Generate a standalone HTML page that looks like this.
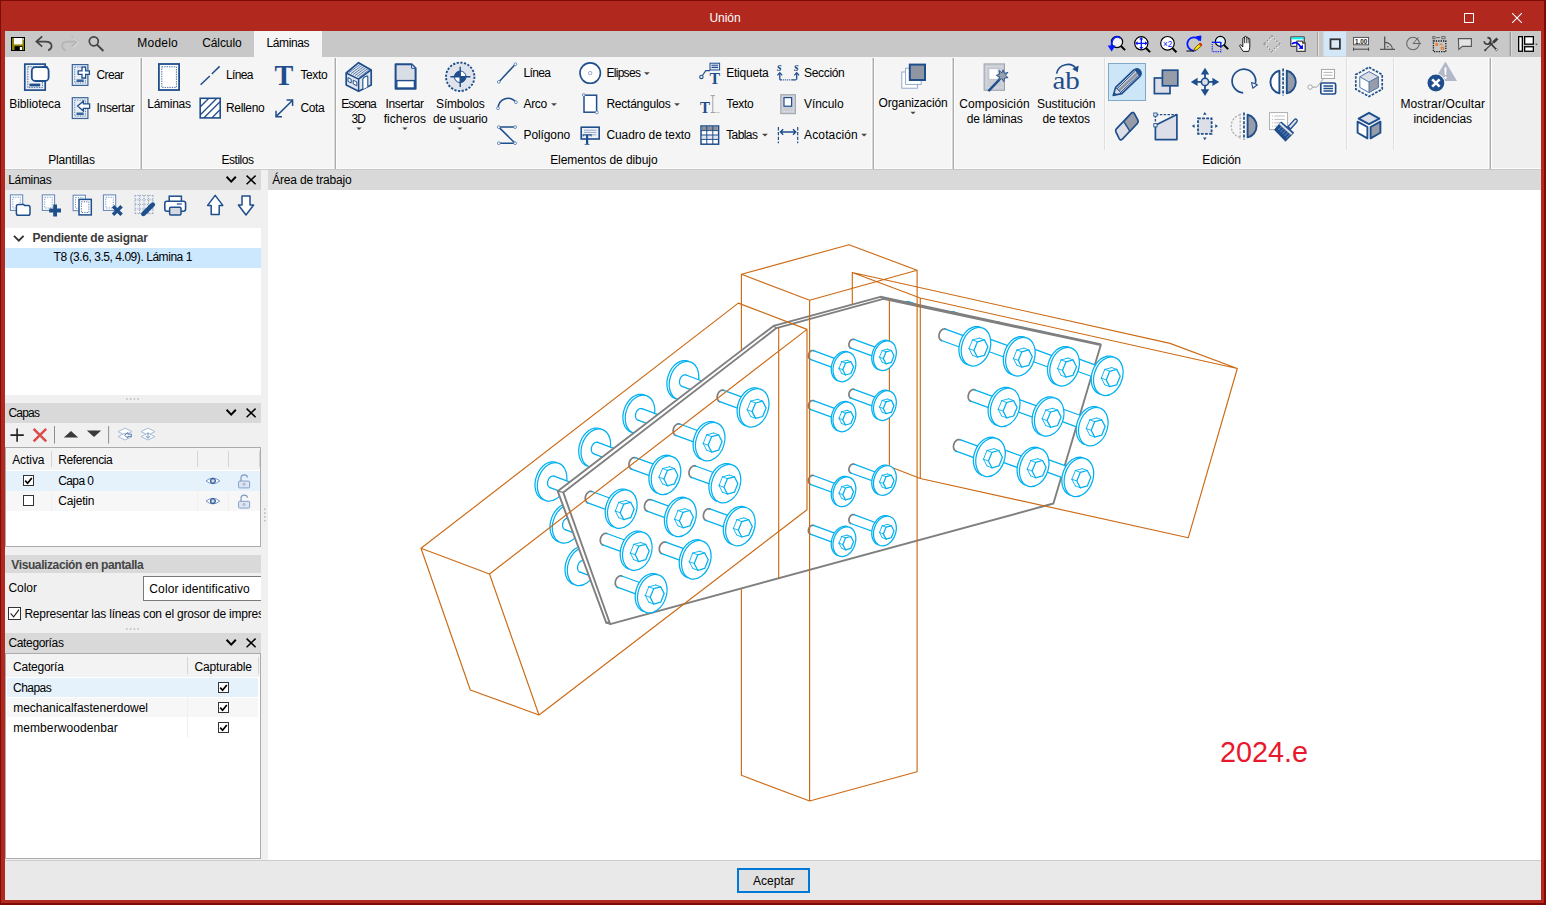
<!DOCTYPE html><html lang="es"><head><meta charset="utf-8"><title>Unión</title><style>
html,body{margin:0;padding:0}
body{width:1546px;height:905px;overflow:hidden;background:#b0281e;font-family:"Liberation Sans", Arial, sans-serif;font-size:12px;color:#000;position:relative}
div,span,svg{position:absolute;box-sizing:border-box}
.t{white-space:pre;line-height:14px;height:14px}
#frame{left:0;top:0;width:1546px;height:905px;border:1px solid #7d0c06;border-right:2px solid #7d0c06;border-bottom:2px solid #7d0c06}
#tabbar{left:5px;top:31px;width:1536px;height:26px;background:#c8c8c8}
#tabsel{left:254px;top:31px;width:68px;height:26px;background:#f5f5f5}
#ribbon{left:5px;top:57px;width:1485px;height:112px;background:#f5f5f5}
#ribbonr{left:1490px;top:57px;width:51px;height:112px;background:#efefef}
#under{left:5px;top:169px;width:1536px;height:731px;background:#f0f0f0}
.sep{width:4px;top:58px;height:111px;margin-left:-2px;border-left:1px solid #fcfcfc;border-right:1px solid #fdfdfd;background:linear-gradient(90deg,#d6d6d6 50%,#adadad 50%)}
.ssep{width:2px;top:58px;height:92px;border-left:1px solid #dedede;border-right:1px solid #fbfbfb}
.hdr{background:#d9d9d9;height:20px}
.white{background:#fff}
.grid{background:#fff;border:1px solid #ababab}
.dwg{left:0;top:0}
</style></head><body>
<div id="frame"></div>
<svg style="left:1464px;top:13px" width="10" height="10" viewBox="0 0 10 10" fill="none"><rect x="0.5" y="0.5" width="9" height="9" stroke="#fff"/></svg>
<svg style="left:1512px;top:13px" width="10" height="10" viewBox="0 0 10 10" fill="none"><path d="M0 0L10 10M10 0L0 10" stroke="#fff" stroke-width="1.1"/></svg>
<div id="tabbar"></div><div id="tabsel"></div>
<div id="ribbon"></div><div id="ribbonr"></div>
<div style="left:5px;top:168px;width:1536px;height:1px;background:#fbfbfb"></div><div style="left:5px;top:169px;width:1536px;height:1px;background:#c8c8c8"></div>
<div class="sep" style="left:141px"></div>
<div class="sep" style="left:335px"></div>
<div class="sep" style="left:873px"></div>
<div class="sep" style="left:953px"></div>
<div class="sep" style="left:1490px"></div>
<div class="ssep" style="left:1104px"></div>
<div class="ssep" style="left:1346px"></div>
<div class="ssep" style="left:1393px"></div>
<div id="under" style="top:170px;height:730px"></div>
<div class="hdr" style="left:5px;top:170px;width:256px"></div>
<div class="hdr" style="left:268px;top:170px;width:1273px"></div>
<div class="white" style="left:5px;top:228px;width:256px;height:167px"></div>
<div style="left:5px;top:248px;width:256px;height:20px;background:#cce8ff"></div>
<div class="hdr" style="left:5px;top:403px;width:256px"></div>
<div class="grid" style="left:5px;top:447px;width:256px;height:100px"></div>
<div style="left:6px;top:448px;width:254px;height:22px;background:#f3f3f3"></div>
<div style="left:6px;top:471px;width:254px;height:20px;background:#e5f1fb"></div>
<div style="left:6px;top:491px;width:254px;height:20px;background:#f7f7f7"></div>
<div style="left:51px;top:451px;width:1px;height:16px;background:#d5d5d5"></div>
<div style="left:197px;top:451px;width:1px;height:16px;background:#d5d5d5"></div>
<div style="left:228px;top:451px;width:1px;height:16px;background:#d5d5d5"></div>
<div style="left:259px;top:451px;width:1px;height:16px;background:#d5d5d5"></div>
<div style="left:51px;top:471px;width:1px;height:40px;background:#f0f0f0"></div>
<div style="left:197px;top:471px;width:1px;height:40px;background:#f0f0f0"></div>
<div style="left:228px;top:471px;width:1px;height:40px;background:#f0f0f0"></div>
<div class="hdr" style="left:5px;top:555px;width:256px;height:18px"></div>
<div style="left:143px;top:576px;width:118px;height:25px;background:#fff;border:1px solid #7a7a7a;border-right:none"></div>
<div class="hdr" style="left:5px;top:633px;width:256px"></div>
<div class="grid" style="left:5px;top:653px;width:256px;height:206px"></div>
<div style="left:6px;top:654px;width:254px;height:23px;background:#f3f3f3"></div>
<div style="left:7px;top:678px;width:251px;height:19px;background:#e5f1fb"></div>
<div style="left:7px;top:698px;width:251px;height:19px;background:#f7f7f7"></div>
<div style="left:187px;top:657px;width:1px;height:17px;background:#d5d5d5"></div>
<div style="left:258px;top:657px;width:1px;height:17px;background:#d5d5d5"></div>
<div style="left:187px;top:678px;width:1px;height:60px;background:#f0f0f0"></div>
<div class="white" style="left:268px;top:190px;width:1273px;height:670px"><svg class="dwg" width="1273" height="670" viewBox="268 190 1273 670" fill="none" stroke-width="1.25" stroke-linecap="round" stroke-linejoin="round">
<defs><g id="bl-sh"><path d="M-30.5 -17.6 L-0.3 -6.6 L-4.3 4.8 L-34.5 -6.2Z" fill="#fff" stroke="none"/><path d="M-34.5 -6.2 L-35.3 -6.6 L-35.9 -7.2 L-36.4 -8 L-36.8 -8.9 L-37 -10 L-37 -11.1 L-36.9 -12.3 L-36.5 -13.4 L-36.1 -14.5 L-35.5 -15.5 L-34.7 -16.3 L-33.9 -17 L-33.1 -17.5 L-32.2 -17.7 L-31.3 -17.8 L-30.5 -17.6" stroke="#7f7f7f" stroke-width="1.7"/><path d="M-30.5 -17.6 L-0.3 -6.6 M-34.5 -6.2 L-4.3 4.8" stroke="#00b0f0"/></g><g id="bl-hd" stroke="#00b0f0" fill="#fff"><ellipse cx="-2.3" cy="-0.9" rx="19.8" ry="14.1" transform="rotate(108.6 -2.3 -0.9)" stroke="none"/><path d="M-8.9 17.8 L-11.4 16.5 L-13.5 14.5 L-15.2 11.9 L-16.4 8.8 L-17 5.4 L-17.1 1.7 L-16.6 -2.1 L-15.5 -5.8 L-14 -9.4 L-12 -12.6 L-9.6 -15.4 L-7 -17.6 L-4.1 -19.1 L-1.2 -20 L1.6 -20.1 L4.3 -19.5" fill="none"/><ellipse cx="0" cy="0" rx="19.8" ry="14.1" transform="rotate(108.6 0 0)" /><path d="M11.9 0 L8.4 8.6 L1.4 10.5 L-2.1 3.7 L1.4 -4.9 L8.4 -6.8Z" fill="none"/><path d="M-3.5 8.6 L-7 1.9 M-7 1.9 L-3.5 -6.8 M-3.5 -6.8 L3.5 -8.6 M-3.5 8.6 L1.4 10.5 M-7 1.9 L-2.1 3.7 M-3.5 -6.8 L1.4 -4.9 M3.5 -8.6 L8.4 -6.8" fill="none" stroke-width="0.9"/></g><g id="bl-bk" stroke="#00b0f0" fill="#fff"><ellipse cx="-2.3" cy="-0.9" rx="19.8" ry="14.1" transform="rotate(108.6 -2.3 -0.9)" stroke="none"/><path d="M-8.9 17.8 L-11.4 16.5 L-13.5 14.5 L-15.2 11.9 L-16.4 8.8 L-17 5.4 L-17.1 1.7 L-16.6 -2.1 L-15.5 -5.8 L-14 -9.4 L-12 -12.6 L-9.6 -15.4 L-7 -17.6 L-4.1 -19.1 L-1.2 -20 L1.6 -20.1 L4.3 -19.5" fill="none"/><ellipse cx="0" cy="0" rx="19.8" ry="14.1" transform="rotate(108.6 0 0)" /><path d="M2 -5.7 L42 9.3 L38 20.7 L-2 5.7Z" stroke="none"/><path d="M-2 5.7 L-2.8 5.3 L-3.4 4.7 L-3.9 3.9 L-4.3 3 L-4.5 1.9 L-4.5 0.8 L-4.4 -0.4 L-4 -1.5 L-3.6 -2.6 L-3 -3.6 L-2.2 -4.4 L-1.4 -5.1 L-0.6 -5.6 L0.3 -5.8 L1.2 -5.9 L2 -5.7" fill="#fff"/><path d="M2 -5.7 L42 9.3 M-2 5.7 L38 20.7" fill="none"/></g><g id="bs-sh"><path d="M-30.9 -16.3 L-0.2 -5 L-3.3 3.7 L-34.1 -7.5Z" fill="#fff" stroke="none"/><path d="M-34.1 -7.5 L-34.6 -7.8 L-35.1 -8.3 L-35.5 -8.9 L-35.8 -9.6 L-35.9 -10.4 L-36 -11.3 L-35.9 -12.2 L-35.6 -13.1 L-35.2 -13.9 L-34.8 -14.7 L-34.2 -15.3 L-33.6 -15.8 L-32.9 -16.2 L-32.2 -16.4 L-31.6 -16.4 L-30.9 -16.3" stroke="#7f7f7f" stroke-width="1.7"/><path d="M-30.9 -16.3 L-0.2 -5 M-34.1 -7.5 L-3.3 3.7" stroke="#00b0f0"/></g><g id="bs-hd" stroke="#00b0f0" fill="#fff"><ellipse cx="-1.8" cy="-0.7" rx="15.3" ry="10.9" transform="rotate(108.6 -1.8 -0.7)" stroke="none"/><path d="M-6.9 13.7 L-8.8 12.7 L-10.4 11.2 L-11.7 9.2 L-12.6 6.8 L-13.1 4.1 L-13.1 1.3 L-12.8 -1.6 L-12 -4.5 L-10.8 -7.2 L-9.2 -9.7 L-7.4 -11.8 L-5.4 -13.5 L-3.2 -14.7 L-0.9 -15.4 L1.3 -15.5 L3.3 -15" fill="none"/><ellipse cx="0" cy="0" rx="15.3" ry="10.9" transform="rotate(108.6 0 0)" /><path d="M9.1 0 L6.5 6.6 L1.1 8.1 L-1.6 2.9 L1.1 -3.8 L6.5 -5.2Z" fill="none"/><path d="M-2.7 6.6 L-5.4 1.4 M-5.4 1.4 L-2.7 -5.2 M-2.7 -5.2 L2.7 -6.6 M-2.7 6.6 L1.1 8.1 M-5.4 1.4 L-1.6 2.9 M-2.7 -5.2 L1.1 -3.8 M2.7 -6.6 L6.5 -5.2" fill="none" stroke-width="0.9"/></g><g id="bs-bk" stroke="#00b0f0" fill="#fff"><ellipse cx="-1.8" cy="-0.7" rx="15.3" ry="10.9" transform="rotate(108.6 -1.8 -0.7)" stroke="none"/><path d="M-6.9 13.7 L-8.8 12.7 L-10.4 11.2 L-11.7 9.2 L-12.6 6.8 L-13.1 4.1 L-13.1 1.3 L-12.8 -1.6 L-12 -4.5 L-10.8 -7.2 L-9.2 -9.7 L-7.4 -11.8 L-5.4 -13.5 L-3.2 -14.7 L-0.9 -15.4 L1.3 -15.5 L3.3 -15" fill="none"/><ellipse cx="0" cy="0" rx="15.3" ry="10.9" transform="rotate(108.6 0 0)" /><path d="M1.6 -4.4 L41.6 10.6 L38.4 19.4 L-1.6 4.4Z" stroke="none"/><path d="M-1.6 4.4 L-2.1 4.1 L-2.6 3.6 L-3 3 L-3.3 2.3 L-3.4 1.5 L-3.5 0.6 L-3.4 -0.3 L-3.1 -1.2 L-2.7 -2 L-2.3 -2.8 L-1.7 -3.4 L-1.1 -3.9 L-0.4 -4.3 L0.3 -4.5 L0.9 -4.5 L1.6 -4.4" fill="#fff"/><path d="M1.6 -4.4 L41.6 10.6 M-1.6 4.4 L38.4 19.4" fill="none"/></g></defs>
<g>
<use href="#bl-bk" x="684" y="380.7"/>
<use href="#bl-bk" x="640" y="414.4"/>
<use href="#bl-bk" x="595.8" y="448.1"/>
<use href="#bl-bk" x="552.1" y="481.9"/>
<use href="#bl-bk" x="655.8" y="456.4"/>
<use href="#bl-bk" x="611.3" y="490.1"/>
<use href="#bl-bk" x="567.1" y="523.9"/>
<use href="#bl-bk" x="670.2" y="499.3"/>
<use href="#bl-bk" x="626.1" y="532.6"/>
<use href="#bl-bk" x="582.1" y="566.4"/>
<use href="#bl-bk" x="906.3" y="321.7"/>
<use href="#bl-bk" x="950.7" y="331.7"/>
<use href="#bl-bk" x="994.9" y="341.7"/>
<use href="#bl-bk" x="1038.6" y="351.2"/>
<use href="#bl-bk" x="935.5" y="382.4"/>
<use href="#bl-bk" x="979.5" y="391.9"/>
<use href="#bl-bk" x="1023.6" y="401.6"/>
<use href="#bl-bk" x="920.8" y="432.3"/>
<use href="#bl-bk" x="964.5" y="442.3"/>
<use href="#bl-bk" x="1009.2" y="452.3"/>
<use href="#bs-bk" x="776.8" y="341.5"/>
</g>
<g stroke="#7f7f7f" stroke-width="1.9" fill="#fff">
<path d="M557.7 491.2 L773.5 325.9 L880.4 296.8 L1100.3 344.2 L1052.2 502.9 L606.3 622.9Z"/>
<path d="M563.2 492.4 L776.4 328.1 L883.4 298.8 L1100.8 345 L1053.4 503.5 L610.2 624.2Z"/>
<path d="M557.7 491.2 L563.2 492.4 M773.5 325.9 L776.4 328.1 M880.4 296.8 L883.4 298.8 M606.3 622.9 L610.2 624.2" stroke-width="1.2"/>
</g>
<g>
<use href="#bl-sh" x="754.2" y="407.9"/>
<use href="#bl-sh" x="710.2" y="441.6"/>
<use href="#bl-sh" x="666" y="475.3"/>
<use href="#bl-sh" x="622.3" y="509.1"/>
<use href="#bl-sh" x="726" y="483.6"/>
<use href="#bl-sh" x="681.5" y="517.3"/>
<use href="#bl-sh" x="637.3" y="551.1"/>
<use href="#bl-sh" x="740.4" y="526.5"/>
<use href="#bl-sh" x="696.3" y="559.8"/>
<use href="#bl-sh" x="652.3" y="593.6"/>
<use href="#bl-sh" x="976" y="346.7"/>
<use href="#bl-sh" x="1020.4" y="356.7"/>
<use href="#bl-sh" x="1064.6" y="366.7"/>
<use href="#bl-sh" x="1108.3" y="376.2"/>
<use href="#bl-sh" x="1005.2" y="407.4"/>
<use href="#bl-sh" x="1049.2" y="416.9"/>
<use href="#bl-sh" x="1093.3" y="426.6"/>
<use href="#bl-sh" x="990.5" y="457.3"/>
<use href="#bl-sh" x="1034.2" y="467.3"/>
<use href="#bl-sh" x="1078.9" y="477.3"/>
<use href="#bs-sh" x="844.4" y="366.9"/>
<use href="#bs-sh" x="884.9" y="355.7"/>
<use href="#bs-sh" x="844.4" y="416.9"/>
<use href="#bs-sh" x="884.9" y="405.6"/>
<use href="#bs-sh" x="844.4" y="491.8"/>
<use href="#bs-sh" x="884.9" y="480.5"/>
<use href="#bs-sh" x="844.4" y="541.7"/>
<use href="#bs-sh" x="884.9" y="531"/>
</g>
<path d="M741.4 274.3 L849 244.7 L917.1 270.3 L809.6 300.2Z M741.4 274.3 L741.4 349.5 M741.4 589.5 L741.4 775.3 L809.6 801 L917.1 771.7 L917.1 270.3 M809.6 300.2 L809.6 801 M421 548.3 L738.3 303.1 L807 329.4 L489.5 574 L421 548.3 L470.3 690 L539 715 L489.5 574 M807 329.4 L807 509.8 L539 715 M778.7 328.4 L778.7 577.6 M852.3 272.5 L1170 343.4 L1237.3 368.5 L920.3 298Z M852.3 272.5 L852.3 303.5 M920.3 298 L920.3 478.5 L1188.3 537.7 L1237.3 368.5 M889.4 300.5 L889.4 466.5 L920.3 478.5" stroke="#cc6a14" stroke-width="1.15"/>
<g>
<use href="#bl-hd" x="754.2" y="407.9"/>
<use href="#bl-hd" x="710.2" y="441.6"/>
<use href="#bl-hd" x="666" y="475.3"/>
<use href="#bl-hd" x="622.3" y="509.1"/>
<use href="#bl-hd" x="726" y="483.6"/>
<use href="#bl-hd" x="681.5" y="517.3"/>
<use href="#bl-hd" x="637.3" y="551.1"/>
<use href="#bl-hd" x="740.4" y="526.5"/>
<use href="#bl-hd" x="696.3" y="559.8"/>
<use href="#bl-hd" x="652.3" y="593.6"/>
<use href="#bl-hd" x="976" y="346.7"/>
<use href="#bl-hd" x="1020.4" y="356.7"/>
<use href="#bl-hd" x="1064.6" y="366.7"/>
<use href="#bl-hd" x="1108.3" y="376.2"/>
<use href="#bl-hd" x="1005.2" y="407.4"/>
<use href="#bl-hd" x="1049.2" y="416.9"/>
<use href="#bl-hd" x="1093.3" y="426.6"/>
<use href="#bl-hd" x="990.5" y="457.3"/>
<use href="#bl-hd" x="1034.2" y="467.3"/>
<use href="#bl-hd" x="1078.9" y="477.3"/>
<use href="#bs-hd" x="844.4" y="366.9"/>
<use href="#bs-hd" x="884.9" y="355.7"/>
<use href="#bs-hd" x="844.4" y="416.9"/>
<use href="#bs-hd" x="884.9" y="405.6"/>
<use href="#bs-hd" x="844.4" y="491.8"/>
<use href="#bs-hd" x="884.9" y="480.5"/>
<use href="#bs-hd" x="844.4" y="541.7"/>
<use href="#bs-hd" x="884.9" y="531"/>
</g>
<text x="1220" y="762.4" font-family="'Liberation Sans',sans-serif" font-size="29" fill="#e8192c" stroke="none" textLength="88" lengthAdjust="spacingAndGlyphs">2024.e</text>
</svg></div>
<div style="left:5px;top:860px;width:1536px;height:1px;background:#cdcdcd"></div>
<div style="left:5px;top:861px;width:1536px;height:39px;background:#e9e9e9"></div>
<div style="left:737px;top:868px;width:73px;height:25px;border:2px solid #0078d7;background:#e1e1e1"></div>
<svg style="left:0;top:31px" width="1546" height="139" viewBox="0 31 1546 139" fill="none"><rect x="11" y="37" width="14" height="14" fill="#000"/><rect x="12" y="38" width="12" height="12" fill="#8a8200"/><rect x="14" y="38" width="8.4" height="6.4" fill="#fff"/><rect x="14.6" y="46.2" width="7.8" height="3.8" fill="#000"/><rect x="19.8" y="47" width="2.2" height="3" fill="#fff"/><rect x="23" y="38.6" width="0.9" height="1.2" fill="#fff"/><path d="M42.2 36.4L36.4 41.6L42.2 46.6M36.6 41.6H45.2C49.6 41.6 51.6 43.6 51.6 46C51.6 48 50.2 49.6 48.2 50.4" stroke="#444" stroke-width="1.7"/><path d="M71.6 36.4L77.4 41.6L71.6 46.6M77.2 41.6H68.6C64.2 41.6 62.2 43.6 62.2 46C62.2 48 63.6 49.6 65.6 50.4" stroke="#b4b4b4" stroke-width="1.7" stroke-dasharray="9 0"/><path d="M72.6 37.4L78.4 42.6L72.6 47.6" stroke="#e4e4e4" stroke-width="1"/><circle cx="93.8" cy="41.3" r="4.5" stroke="#444" stroke-width="1.7"/><path d="M97 44.6L103.4 51" stroke="#444" stroke-width="2"/><path d="M1120.92 45.92L1125.12 50.12" stroke="#000" stroke-width="2"/><circle cx="1117" cy="42" r="5.6" fill="#f4f4f4" stroke="#000" stroke-width="1.2"/><path d="M1120.5 38C1116 35 1111.5 38 1111.5 46" stroke="#0618ff" stroke-width="1.8"/><path d="M1107.6 45.6h8l-4 6z" fill="#0618ff"/><path d="M1145.92 47.92L1150.12 52.12" stroke="#000" stroke-width="2"/><circle cx="1141.3" cy="43.3" r="6.6" fill="#fff" stroke="#000" stroke-width="1.2"/><path d="M1141.3 38v10.6M1136 43.3h10.6" stroke="#0618ff" stroke-width="1.3"/><path d="M1141.3 37l2 2.6h-4zM1141.3 49.6l2 -2.6h-4zM1135 43.3l2.6 -2v4zM1147.6 43.3l-2.6 -2v4z" fill="#0618ff"/><path d="M1172.26 48.06L1176.46 52.26" stroke="#000" stroke-width="2"/><circle cx="1167.5" cy="43.3" r="6.8" fill="#fff" stroke="#000" stroke-width="1.2"/><text x="1162.9" y="46.6" font-size="8.5" font-family="'Liberation Sans',sans-serif" fill="#0618ff" textLength="9.4" lengthAdjust="spacingAndGlyphs">×2</text><path d="M1196 50.2A6.6 6.6 0 1 1 1199.6 40.6" stroke="#0618ff" stroke-width="1.8"/><path d="M1195.8 36.2l5.6 -0.6 -0.4 6z" fill="#0618ff"/><path d="M1186.4 51h7.6" stroke="#000" stroke-width="1"/><path d="M1193.8 50.8l1.2 -3 5 -4.6 2 2 -5 4.6z" fill="#ffe000" stroke="#5a4a00" stroke-width="0.8"/><circle cx="1200.6" cy="44.4" r="1.3" fill="#e02020"/><path d="M1223.9 44.9L1228.1 49.1" stroke="#000" stroke-width="2"/><circle cx="1220.4" cy="41.4" r="5" fill="#dff3f8" stroke="#000" stroke-width="1.2"/><rect x="1212.2" y="42.4" width="8.6" height="9.2" stroke="#0618ff" stroke-width="1.1" stroke-dasharray="1.1 1.1"/><path d="M1212.2 42.4h8.6v5" stroke="#0618ff" stroke-width="1.2"/><path d="M1243.2 51.4c-1-1.4-2.4-3.6-3.4-5.2-.6-1 .6-1.8 1.6-.8l1.4 1.6v-8.4c0-1.2 1.7-1.2 1.7 0v-1.4c0-1.2 1.8-1.2 1.8 0v.8c0-1.2 1.8-1.2 1.8 0v1.2c0-1.1 1.7-1.1 1.7 0v8c0 1.8-.6 3-1.2 4.200z" fill="#fff" stroke="#000" stroke-width="0.9"/><path d="M1244.5 38.6v4.600M1246.300 38v5.200M1248.100 38.800v4.400" stroke="#000" stroke-width="0.7"/><path d="M1265.200 44.600L1272.600 37L1280.200 44.600L1272.600 52.200z" stroke="#fff" stroke-width="1.100" stroke-dasharray="1.800 1.600"/><path d="M1264.400 43.800L1271.800 36.200L1279.400 43.800L1271.800 51.400z" stroke="#8c8c8c" stroke-width="1.100" stroke-dasharray="1.800 1.600"/><path d="M1270.200 36.400q1.600 -2 3.200 0M1270.200 51.200q1.600 2 3.200 0M1264.600 42.200q-2 1.600 0 3.200M1279.200 42.200q2 1.600 0 3.200" stroke="#9a9a9a" stroke-width="0.900"/><rect x="1290.800" y="36.800" width="13.400" height="9.600" rx="0.800" fill="#fff" stroke="#444" stroke-width="1.300"/><rect x="1291.400" y="37.400" width="12.200" height="1.900" fill="#00f6f6"/><path d="M1296.800 41.200h5.800v1.800h2.600v8.400h-8.400z" fill="#fff" stroke="#444" stroke-width="1.300" stroke-linejoin="round"/><path d="M1292.400 43.600c3.400 -2.400 6 -0.400 8.600 3.600" stroke="#0000ff" stroke-width="1.700" stroke-linecap="round"/><path d="M1303 49l-4.600 -0.200 4.400 -4.200z" fill="#0000ff"/><path d="M1317.500 32v24" stroke="#a2a2a2"/><path d="M1318.500 32v24" stroke="#e2e2e2"/><rect x="1323.500" y="31.500" width="22.500" height="25" fill="#d3e7f8"/><rect x="1330.500" y="39.300" width="9.400" height="9.400" stroke="#333" stroke-width="1.800" fill="#dbeaf8"/><rect x="1353.600" y="37.400" width="15" height="7.400" fill="#fff" stroke="#444" stroke-width="0.900"/><text x="1355" y="43.700" font-size="6.800" font-weight="bold" font-family="'Liberation Sans',sans-serif" fill="#222" textLength="12.200" lengthAdjust="spacingAndGlyphs">1.00</text><path d="M1353.600 49.200h15M1353.600 47.600v3.200M1368.600 47.600v3.200" stroke="#444" stroke-width="1"/><path d="M1384.700 36.600v12.800M1380 49.400h15" stroke="#555" stroke-width="1.300"/><path d="M1384.700 42.400c4.400 0 7.600 3 7.800 7" stroke="#555" stroke-width="1.100"/><circle cx="1387.800" cy="46.800" r="0.800" fill="#555"/><circle cx="1413" cy="43.500" r="6.300" stroke="#666" stroke-width="1.100"/><path d="M1421.200 43.500h-8.200l5.600 -6.200" stroke="#666" stroke-width="1"/><rect x="1433.400" y="41" width="12.400" height="10.600" stroke="#111" stroke-width="1.300" stroke-dasharray="1.300 1.100"/><rect x="1432.800" y="36.600" width="2.200" height="2.200" stroke="#555" stroke-width="0.800"/><path d="M1436.400 37.600h3.400" stroke="#555"/><rect x="1441.800" y="36.600" width="3.200" height="2.200" stroke="#555" stroke-width="0.800"/><rect x="1435.800" y="43.600" width="1.800" height="1.800" stroke="#e8701a" stroke-width="0.900"/><rect x="1441.200" y="47.300" width="2.400" height="2" stroke="#e8701a" stroke-width="0.900"/><path d="M1439.600 44.200h2.400v1.400" stroke="#e8701a" stroke-width="0.900"/><path d="M1458.400 38.600h13v7.800h-9l-3.600 3z" fill="#e4e4e4" stroke="#555" stroke-width="1.100"/><path d="M1489.600 42.400L1496.300 49.500" stroke="#3a3a3a" stroke-width="1.600" stroke-linecap="round"/><path d="M1487.400 37.600a3.300 3.300 0 1 1 -3.200 3.600" stroke="#3a3a3a" stroke-width="1.600"/><circle cx="1496.500" cy="49.700" r="1" fill="#fff" stroke="#3a3a3a" stroke-width="0.600"/><path d="M1497.400 38.600L1493.200 42.600" stroke="#3a3a3a" stroke-width="2.800"/><path d="M1493.200 42.600L1484.800 50.400" stroke="#3a3a3a" stroke-width="1.200"/><path d="M1486 49.400l-1.400 1.400" stroke="#3a3a3a" stroke-width="1.800"/><path d="M1509.500 32v24" stroke="#b4b4b4"/><path d="M1510.500 32v24" stroke="#9c9c9c"/><path d="M1511.500 32v24" stroke="#d6d6d6"/><rect x="1518.650" y="36.650" width="3.700" height="14.600" fill="#fff" stroke="#000" stroke-width="1.300"/><rect x="1524.650" y="36.650" width="8.700" height="7.500" fill="#fff" stroke="#000" stroke-width="1.300"/><rect x="1524.650" y="46.750" width="8.700" height="4.500" fill="#fff" stroke="#000" stroke-width="1.300"/><path d="M1535.1 43.85h2.6l-1.3 1.5z" fill="#333"/><rect x="24.800" y="64.100" width="20.400" height="26" fill="#eef1f6" stroke="#1f4e8c" stroke-width="1.700"/><rect x="27.800" y="66.800" width="14.600" height="20.800" stroke="#1f4e8c" stroke-width="0.800" stroke-dasharray="1.500 1"/><rect x="29.400" y="83.600" width="10.800" height="2.800" fill="#1f4e8c"/><rect x="31.800" y="67.200" width="16.800" height="13.800" rx="3.600" fill="#fff" stroke="#1f4e8c" stroke-width="1.800"/><path d="M42.600 67h4.200" stroke="#1f4e8c" stroke-width="2.200" stroke-linecap="round"/><rect x="72.3" y="64.6" width="15.6" height="20.8" fill="#e9edf4" stroke="#3a649c" stroke-width="1.2"/><rect x="74.7" y="67" width="10.8" height="16" stroke="#3a649c" stroke-width="0.8" stroke-dasharray="1.2 1.2"/><rect x="76.5" y="79.4" width="7.2" height="2.6" fill="#3a649c"/><rect x="72.3" y="97.7" width="15.6" height="20.8" fill="#e9edf4" stroke="#3a649c" stroke-width="1.2"/><rect x="74.7" y="100.1" width="10.8" height="16" stroke="#3a649c" stroke-width="0.8" stroke-dasharray="1.2 1.2"/><rect x="76.5" y="112.5" width="7.2" height="2.6" fill="#3a649c"/><path d="M82 67.200h3.600v3.600h3.800v3.600h-3.800v3.600h-3.600v-3.600h-3.800v-3.600h3.800z" fill="#fff" stroke="#1f4e8c" stroke-width="1.300"/><path d="M77.600 106l5.800 -4.800v2.700h6.200v4.400h-6.200v2.700z" fill="#fff" stroke="#1f4e8c" stroke-width="1.300"/><rect x="158.900" y="64" width="20.200" height="26" fill="#fff" stroke="#1f4e8c" stroke-width="1.800"/><rect x="161.800" y="66.800" width="14.600" height="20.600" stroke="#1f4e8c" stroke-width="0.800" stroke-dasharray="1.400 1"/><path d="M200.600 84.800L209.800 76M211.800 74L219.600 66.400" stroke="#1f4e8c" stroke-width="1.500"/><rect x="200.200" y="98.300" width="20" height="19.600" fill="#fff" stroke="#1f4e8c" stroke-width="1.600"/><path d="M200.600 106.500L208.600 98.500M200.600 114.500L216.600 98.500M204 117.700L220 101.700M212 117.700L220 109.700" stroke="#1f4e8c" stroke-width="1.300"/><text x="274.600" y="85.200" font-family="'Liberation Serif',serif" font-weight="bold" font-size="29" fill="#1f4e8c" textLength="18.800" lengthAdjust="spacingAndGlyphs">T</text><path d="M276 116.600L292.600 100.200M276 110.800v6h6M286.600 100h6v6" stroke="#1f4e8c" stroke-width="1.500"/><path d="M358.600 62.700L346.200 73V85.100L358.600 91.300L371.200 85.100V69.900z" fill="#e3e7ef" stroke="#1f4e8c" stroke-width="1.700" stroke-linejoin="round"/><path d="M346.200 73L358.600 79.200L371.200 69.900M358.600 79.200V91.300" stroke="#1f4e8c" stroke-width="1.500"/><path d="M349 72.600L360.400 64.200M351 73.600L362.400 65.200M353 74.600L364.400 66.200M355 75.600L366.400 67.200M357 76.600L368.400 68.200M358.800 77.800L370 69" stroke="#1f4e8c" stroke-width="0.700"/><path d="M348 77.600l3.200 1.600v3.800l-3.200 -1.600zM353.200 80.200l3.600 1.800v3.800l-3.600 -1.800z" fill="#fff" stroke="#1f4e8c" stroke-width="1"/><path d="M362.800 89.200v-9.600q0 -1.600 1.400 -2.400l1.800 -1q1.800 -0.800 1.800 1v9.600" fill="#fff" stroke="#1f4e8c" stroke-width="1.100"/><path d="M395.600 64.300H411.600L415.600 68.300V88.700H395.600z" fill="#d9dde6" stroke="#1f4e8c" stroke-width="2" stroke-linejoin="round"/><path d="M411.600 64.300V68.300H415.600z" fill="#fff" stroke="#1f4e8c" stroke-width="1"/><rect x="396.800" y="80.600" width="17.600" height="7.400" fill="#fff" stroke="#1f4e8c" stroke-width="1.400"/><circle cx="460.200" cy="76.800" r="14.200" fill="#dfe3ec" stroke="#1f4e8c" stroke-width="1.900" stroke-dasharray="2.200 1.500"/><circle cx="460.200" cy="76.800" r="5.800" fill="#fff"/><path d="M460.200 76.800V71A5.800 5.800 0 0 0 454.400 76.800zM460.200 76.800V82.600A5.800 5.800 0 0 0 466 76.800z" fill="#1f4e8c"/><circle cx="460.200" cy="76.800" r="5.800" stroke="#1f4e8c" stroke-width="1"/><path d="M450.400 76.800H470.400M460.200 66.800V87" stroke="#1f4e8c" stroke-width="1.400"/><path d="M356.4 127.4h5.2l-2.6 2.6z" fill="#444"/><path d="M402.3 127.4h5.2l-2.6 2.6z" fill="#444"/><path d="M457.3 127.4h5.2l-2.6 2.6z" fill="#444"/><path d="M498.800 81.900L515.400 64.200" stroke="#1f4e8c" stroke-width="1.500"/><circle cx="498.8" cy="81.9" r="1.400" fill="#fff" stroke="#4d74a8" stroke-width="0.800"/><circle cx="515.4" cy="64.2" r="1.400" fill="#fff" stroke="#4d74a8" stroke-width="0.800"/><path d="M498 108.200C498.600 99.600 508.800 94.400 515.900 102.200" stroke="#1f4e8c" stroke-width="1.500"/><circle cx="498" cy="108.2" r="1.400" fill="#fff" stroke="#4d74a8" stroke-width="0.800"/><circle cx="515.9" cy="102.2" r="1.400" fill="#fff" stroke="#4d74a8" stroke-width="0.800"/><path d="M515.100 127.100H498.800L515.100 143.200H498.800" stroke="#1f4e8c" stroke-width="1.500" stroke-linejoin="round"/><circle cx="515.1" cy="127.1" r="1.400" fill="#fff" stroke="#4d74a8" stroke-width="0.800"/><circle cx="498.8" cy="127.1" r="1.400" fill="#fff" stroke="#4d74a8" stroke-width="0.800"/><circle cx="515.1" cy="143.2" r="1.400" fill="#fff" stroke="#4d74a8" stroke-width="0.800"/><circle cx="498.8" cy="143.2" r="1.400" fill="#fff" stroke="#4d74a8" stroke-width="0.800"/><circle cx="590.200" cy="73.100" r="10.200" fill="#fff" stroke="#1f4e8c" stroke-width="1.600"/><circle cx="590.200" cy="73.100" r="1.700" stroke="#7d98bf" stroke-width="0.800"/><rect x="584" y="95.200" width="12.600" height="17" fill="#fff" stroke="#1f4e8c" stroke-width="1.500"/><circle cx="583.8" cy="95" r="1.400" fill="#fff" stroke="#4d74a8" stroke-width="0.800"/><circle cx="596.8" cy="112.4" r="1.400" fill="#fff" stroke="#4d74a8" stroke-width="0.800"/><rect x="581.200" y="127.200" width="18" height="11.800" fill="#eef1f6" stroke="#1f4e8c" stroke-width="1.600"/><path d="M584 130.200h12.400M584 132.400h12.400M590 134.800h6.400" stroke="#8fa3c4" stroke-width="0.900"/><path d="M582.600 134.200h9v2.200h-0.800l-0.400 -1h-2.200v8.400l1.400 0.400v0.600h-5v-0.600l1.400 -0.400v-8.400h-2.200l-0.400 1h-0.800z" fill="#1f4e8c"/><path d="M644 72.2h5.8l-2.9 2.8z" fill="#444"/><path d="M674.1 103.2h5.8l-2.9 2.8z" fill="#444"/><path d="M551.1 103.2h5.8l-2.9 2.8z" fill="#444"/><circle cx="701.400" cy="76.900" r="1.700" stroke="#1f4e8c" stroke-width="1.100"/><path d="M702.400 75.500L705.800 70.600H710" stroke="#1f4e8c" stroke-width="1.100"/><rect x="710" y="63.200" width="9.600" height="6.800" fill="#dfe4ee" stroke="#1f4e8c" stroke-width="1"/><path d="M711.600 65.300h6.400M711.600 67.400h6.400" stroke="#1f4e8c" stroke-width="1.100"/><text x="709.600" y="84" font-family="'Liberation Serif',serif" font-weight="bold" font-size="16.500" fill="#1f4e8c" textLength="10.600" lengthAdjust="spacingAndGlyphs">T</text><text x="700" y="113" font-family="'Liberation Serif',serif" font-weight="bold" font-size="17" fill="#1f4e8c" textLength="10" lengthAdjust="spacingAndGlyphs">T</text><path d="M712.800 95.600V112.400M710.600 95.600h4.400M710.600 112.500h4.400" stroke="#9a9a9a" stroke-width="0.900"/><path d="M715.600 112.500h4.400" stroke="#9a9a9a" stroke-width="0.900" stroke-dasharray="1 1"/><rect x="701" y="126" width="17.600" height="18.200" fill="#fff" stroke="#1f4e8c" stroke-width="1.500"/><rect x="701.800" y="126.800" width="16" height="3.400" fill="#8c8f96"/><rect x="701.800" y="135" width="16" height="3.800" fill="#dfe4ee"/><path d="M701 130.600h17.600M701 135h17.600M701 139.400h17.600M706.800 126v18.200M712.800 126v18.200" stroke="#1f4e8c" stroke-width="1"/><path d="M762.1 133.8h5.8l-2.9 2.8z" fill="#444"/><text x="777" y="71" font-family="'Liberation Serif',serif" font-style="italic" font-weight="bold" font-size="12" fill="#1f4e8c">s</text><text x="794" y="71" font-family="'Liberation Serif',serif" font-style="italic" font-weight="bold" font-size="12" fill="#1f4e8c">s</text><path d="M779.800 79.800V73.400M796.700 79.800V73.400" stroke="#1f4e8c" stroke-width="1.300"/><path d="M777.400 75.400l2.400 -2.800 2.400 2.800M794.300 75.400l2.400 -2.800 2.400 2.800" stroke="#1f4e8c" stroke-width="1.200"/><path d="M779.800 79.800H796.700" stroke="#1f4e8c" stroke-width="1.300" stroke-dasharray="2.400 1 1 1 1 1 1 1 1 1 2.400 0"/><rect x="780.800" y="94.700" width="14.600" height="19" fill="#c9ccd3" stroke="#9da2ad" stroke-width="1"/><rect x="782.800" y="96.800" width="10.600" height="14.800" stroke="#eceef2" stroke-width="0.700" stroke-dasharray="1 1"/><rect x="784" y="97.600" width="7.600" height="8.600" fill="#fff" stroke="#1f4e8c" stroke-width="1.200"/><path d="M778.400 127.100V143.200M797.700 127.100V143.200" stroke="#1f4e8c" stroke-width="1.200" stroke-dasharray="3.400 1.400"/><path d="M780.600 132H795.600M783.200 129.200L780.400 132L783.200 134.800M793 129.200L795.800 132L793 134.800" stroke="#1f4e8c" stroke-width="1.400"/><path d="M861.2 133.8h5.8l-2.9 2.8z" fill="#444"/><rect x="901.800" y="72" width="15.600" height="16.200" fill="#fff" stroke="#8aa3c8" stroke-width="0.900"/><rect x="905.600" y="68.200" width="15.600" height="16.200" fill="#fff" stroke="#8aa3c8" stroke-width="0.900"/><rect x="909.800" y="64.600" width="15.200" height="15.400" fill="#8f95a1" stroke="#1f4e8c" stroke-width="2"/><path d="M910.4 111.7h5.2l-2.6 2.6z" fill="#444"/><rect x="984.100" y="63.900" width="20.400" height="26.400" fill="#c9ccd3" stroke="#9da2ad" stroke-width="1"/><rect x="986.600" y="66.400" width="15.400" height="21.400" stroke="#eceef2" stroke-width="0.700" stroke-dasharray="1 1"/><rect x="988.900" y="68.700" width="9.200" height="10.600" fill="#fff" stroke="#b9bdc7" stroke-width="0.800"/><path d="M988.400 91.200L999.400 79.600" stroke="#1f4e8c" stroke-width="2.400"/><path d="M1003.100 69.800l1.200 3.600 3.600 -1 -2.400 2.900 2.600 2.400 -3.600 0.300 -0.600 3.800 -2 -3.200 -3.200 1.800 1 -3.600 -3.400 -1.400 3.400 -1.300 -0.600 -3.600 2.800 2.400z" fill="#9aa0ac" stroke="#1f4e8c" stroke-width="0.900"/><text x="1052.400" y="89.400" font-family="'Liberation Serif',serif" font-size="26" fill="#1f4e8c" textLength="27.400" lengthAdjust="spacingAndGlyphs">ab</text><path d="M1056.600 73.600C1058.600 63.600 1071.600 61.600 1076 68.600" stroke="#1f4e8c" stroke-width="1.600"/><path d="M1078.600 65.600l-0.800 6.600 -5.600 -3.200z" fill="#1f4e8c"/><rect x="1108.500" y="63.500" width="37" height="37" fill="#cde6f7" stroke="#7fa8c9" stroke-width="1"/><path d="M1113.200 95.400L1115.600 87.400L1133.600 70.200Q1137.200 67.200 1140 70.400Q1142.400 73.600 1139.600 76.600L1121.800 93.600z" fill="#d9dde6" stroke="#1f4e8c" stroke-width="1.600" stroke-linejoin="round"/><path d="M1118 89.600L1136.400 72.200L1138 74.200L1119.800 91.600z" fill="#8f95a1" stroke="none"/><path d="M1117 88.800L1135.200 71.200M1120.600 92.400L1138.800 75" stroke="#1f4e8c" stroke-width="1"/><path d="M1134.200 69.600Q1137.400 67.200 1140 70.400Q1142.400 73.600 1139.600 76.400z" fill="#1f4e8c"/><path d="M1113.200 95.400l1 -3.400 2.600 2.600z" fill="#1f4e8c"/><path d="M1115.600 87.400L1121.800 93.600" stroke="#1f4e8c" stroke-width="1"/><rect x="1154.400" y="78" width="15.600" height="15.600" fill="#dcdfe7" stroke="#1f4e8c" stroke-width="1.700"/><rect x="1162.400" y="70.200" width="15.400" height="15.600" fill="#979da8" stroke="#1f4e8c" stroke-width="1.700"/><path d="M1205 67.800l4.200 6.800h-8.400zM1205 96l4.200 -6.800h-8.400zM1190.800 81.900l6.800 -4.200v8.400zM1219.200 81.900l-6.800 -4.200v8.400z" fill="#1f4e8c"/><path d="M1205 73v18M1196 81.900h18" stroke="#1f4e8c" stroke-width="1.800"/><circle cx="1205" cy="81.900" r="3.600" fill="#dcdfe7" stroke="#1f4e8c" stroke-width="1.600"/><path d="M1243.200 92.800A11.800 11.800 0 1 1 1255.400 83.600" stroke="#1f4e8c" stroke-width="1.700"/><path d="M1251.600 82.600l5.800 2.200 -4.600 3.400z" fill="#fff" stroke="#1f4e8c" stroke-width="1.100" stroke-linejoin="round"/><path d="M1279.400 70.800A11.600 11.600 0 0 0 1279.400 93.400z" fill="#fff" stroke="#1f4e8c" stroke-width="1.900" stroke-linejoin="round"/><path d="M1286.800 70.800A11.600 11.600 0 0 1 1286.800 93.400z" fill="#979da8" stroke="#1f4e8c" stroke-width="1.900" stroke-linejoin="round"/><path d="M1283.100 68.400V95.600" stroke="#1f4e8c" stroke-width="1.700" stroke-dasharray="3 1.400"/><circle cx="1310.100" cy="87.100" r="2.200" fill="#fff" stroke="#9a9a9a" stroke-width="0.900"/><path d="M1312.400 87.100h4.400l6.400 -8" stroke="#9a9a9a" stroke-width="0.900"/><rect x="1321.400" y="69.400" width="13.200" height="9" fill="#fff" stroke="#9a9a9a" stroke-width="0.900"/><path d="M1323.400 72.400h9.200M1323.400 75.200h9.200" stroke="#b5b5b5" stroke-width="1"/><rect x="1320.800" y="83" width="14.800" height="11" rx="1.600" fill="#fff" stroke="#1f4e8c" stroke-width="1.700"/><path d="M1323.400 86h9.600M1323.400 88.500h9.600M1323.400 91h9.600" stroke="#1f4e8c" stroke-width="1.300"/><path d="M1131.400 113.200Q1133.200 111.600 1134.400 113.800L1137.800 120.200Q1138.600 122 1137.200 123.400L1122.400 139.200Q1120.400 140.800 1119.200 138.600L1115.800 131.600Q1115.200 130 1116.600 128.600z" fill="#dcdfe7" stroke="#1f4e8c" stroke-width="1.700"/><path d="M1123.800 121.600L1131.400 113.200Q1133.200 111.600 1134.400 113.800L1137.800 120.200Q1138.600 122 1137.200 123.400L1129.800 131.200z" fill="#979da8" stroke="#1f4e8c" stroke-width="1.400"/><path d="M1155.400 125.300L1176.900 114.600V139.600H1155.400z" fill="#dcdfe7" stroke="#1f4e8c" stroke-width="1.700" stroke-linejoin="round"/><path d="M1155.400 125.300V114.600H1176.900" stroke="#1f4e8c" stroke-width="1.400" stroke-dasharray="2.400 1.400"/><rect x="1153.800" y="113" width="3.200" height="3.200" fill="#fff" stroke="#1f4e8c" stroke-width="0.900"/><rect x="1153.800" y="123.700" width="3.200" height="3.200" fill="#fff" stroke="#1f4e8c" stroke-width="0.900"/><rect x="1198" y="118.400" width="13.600" height="15.400" fill="#dcdfe7" stroke="#1f4e8c" stroke-width="1.800" stroke-dasharray="2.800 1.300"/><path d="M1204.800 112l1.800 2.800h-3.600zM1204.800 140.200l1.800 -2.800h-3.600zM1191.800 126.100l2.800 -1.800v3.600zM1218 126.100l-2.800 -1.800v3.600z" fill="#1f4e8c"/><path d="M1240.200 114.800A11.600 11.600 0 0 0 1240.200 137.400" stroke="#b0b0b0" stroke-width="1.300" stroke-dasharray="2.200 1.400"/><path d="M1240.200 113.400V139" stroke="#b0b0b0" stroke-width="1.300" stroke-dasharray="2.200 1.400"/><path d="M1247.600 114.800A11.600 11.600 0 0 1 1247.600 137.400z" fill="#979da8" stroke="#1f4e8c" stroke-width="1.900" stroke-linejoin="round"/><path d="M1244 112.400V139.600" stroke="#1f4e8c" stroke-width="1.700" stroke-dasharray="3 1.400"/><rect x="1269.600" y="112.600" width="18" height="17" fill="#fff" stroke="#a6a6a6" stroke-width="0.900"/><path d="M1272 116h1M1274.400 116h10.400M1272 119.400h1M1274.400 119.400h10.400M1272 122.800h1M1274.400 122.800h6M1272 126.200h1M1274.400 126.200h3" stroke="#b5b5b5" stroke-width="0.900"/><path d="M1288 126.600L1294.400 119.600Q1295.600 118.400 1296.800 119.600Q1297.800 120.800 1296.800 122L1290.600 129z" fill="#dcdfe7" stroke="#1f4e8c" stroke-width="1.300"/><path d="M1281.200 122.400L1293.200 132.800L1285.400 140.600L1275 129.700z" fill="#1f4e8c" stroke="#1f4e8c" stroke-width="1.500" stroke-linejoin="round"/><path d="M1278.400 130l3.800 -3.800M1280.400 132l3.800 -3.800M1282.400 134l3.800 -3.800M1284.400 136l3.800 -3.800M1286.200 138.200l3.800 -3.800" stroke="#9db2d2" stroke-width="0.700"/><path d="M1279.800 123.600l12 10.600" stroke="#dcdfe7" stroke-width="2"/><path d="M1369 67.300L1382.200 74.600V89.200L1369 96.500L1355.800 89.200V74.600z" stroke="#1f4e8c" stroke-width="1.700" stroke-dasharray="2.600 1.300"/><path d="M1369 71.600L1378.400 76.800L1369 82z" fill="#dcdfe7"/><path d="M1369 71.600L1359.800 76.800L1369 82L1378.400 76.800z" fill="#dcdfe7"/><path d="M1359.800 76.800V87.400L1369 92.600V82z" fill="#fff"/><path d="M1378.400 76.800V87.400L1369 92.600V82z" fill="#979da8"/><path d="M1369 71.600L1378.400 76.800V87.400L1369 92.600L1359.800 87.400V76.800zM1359.800 76.800L1369 82L1378.400 76.800M1369 82V92.600" stroke="#4d74a8" stroke-width="1"/><path d="M1369 112.800L1379.400 118.600L1369 124.200L1358.600 118.600z" fill="#dcdfe7" stroke="#1f4e8c" stroke-width="1.900" stroke-linejoin="round"/><path d="M1357.600 121.600L1367.400 127V138.400L1357.600 132.800z" fill="#fff" stroke="#1f4e8c" stroke-width="1.900" stroke-linejoin="round"/><path d="M1380.400 121.600L1370.600 127V138.400L1380.400 132.800z" fill="#979da8" stroke="#1f4e8c" stroke-width="1.900" stroke-linejoin="round"/><path d="M1445.400 61.600L1457 81H1433.800z" fill="#b3b8c8"/><path d="M1444.400 67.600h2.200l-0.400 7.400h-1.400z" fill="#fff"/><circle cx="1445.500" cy="77.800" r="1.200" fill="#fff"/><circle cx="1435.900" cy="83" r="9" fill="#1f4e8c" stroke="#f5f5f5" stroke-width="1.200"/><path d="M1432.200 79.300L1439.600 86.700M1439.600 79.300L1432.200 86.700" stroke="#fff" stroke-width="2.600"/></svg><svg style="left:0;top:170px" width="268" height="690" viewBox="0 170 268 690" fill="none"><path d="M226.600 176.8L231.200 181.6L235.800 176.8" stroke="#000" stroke-width="2"/><path d="M246.600 175.6L255.600 184.2M255.600 175.6L246.600 184.2" stroke="#000" stroke-width="1.500"/><path d="M226.600 409.8L231.200 414.6L235.800 409.8" stroke="#000" stroke-width="2"/><path d="M246.600 408.6L255.600 417.2M255.600 408.6L246.600 417.2" stroke="#000" stroke-width="1.500"/><path d="M226.600 639.8L231.200 644.6L235.800 639.8" stroke="#000" stroke-width="2"/><path d="M246.600 638.6L255.600 647.2M255.600 638.6L246.600 647.2" stroke="#000" stroke-width="1.500"/><rect x="10.4" y="194.9" width="12.3" height="15.5" fill="#fff" stroke="#5d82b5" stroke-width="1"/><rect x="12.8" y="197.3" width="7.5" height="10.7" stroke="#5d82b5" stroke-width="0.8" stroke-dasharray="1.2 1.2"/><path d="M18.400 204.400h5.200l1 1.200h3.600q1.800 0 1.800 1.800v6q0 1.800 -1.800 1.800h-10q-1.800 0 -1.800 -1.800v-7.200q0 -1.800 2 -1.800z" fill="#fff" stroke="#1f4e8c" stroke-width="1.500"/><rect x="42.3" y="194.9" width="12.3" height="15.5" fill="#fff" stroke="#5d82b5" stroke-width="1"/><rect x="44.7" y="197.3" width="7.5" height="10.7" stroke="#5d82b5" stroke-width="0.8" stroke-dasharray="1.2 1.2"/><path d="M53.200 204.600h3.800v4h4v3.800h-4v4h-3.800v-4h-4v-3.800h4z" fill="#1f4e8c"/><rect x="73.1" y="195.2" width="12.3" height="15.5" fill="#fff" stroke="#5d82b5" stroke-width="1"/><rect x="75.5" y="197.6" width="7.5" height="10.7" stroke="#5d82b5" stroke-width="0.8" stroke-dasharray="1.2 1.2"/><rect x="79" y="199.4" width="12.3" height="15.5" fill="#fff" stroke="#1f4e8c" stroke-width="1.5"/><rect x="81.4" y="201.8" width="7.5" height="10.7" stroke="#1f4e8c" stroke-width="0.8" stroke-dasharray="1.2 1.2"/><rect x="103.4" y="194.9" width="12.3" height="15.5" fill="#fff" stroke="#5d82b5" stroke-width="1"/><rect x="105.8" y="197.3" width="7.5" height="10.7" stroke="#5d82b5" stroke-width="0.8" stroke-dasharray="1.2 1.2"/><path d="M113 206.200L121.600 214.800M121.600 206.200L113 214.800" stroke="#1f4e8c" stroke-width="3.400"/><path d="M135 195.400h18M135 199.800h18M135 204.400h18M135 209h18M135 213.600h18M135 195.400v18.200M139.500 195.400v18.200M144 195.400v18.200M148.500 195.400v18.200M153 195.400v18.200" stroke="#7d98c2" stroke-width="0.900" stroke-dasharray="1.200 1.200"/><path d="M143.400 213.800L152.800 204.600" stroke="#1f4e8c" stroke-width="4.600" stroke-linecap="round"/><path d="M141.600 215.600l1 -3.400 2.600 2.600z" fill="#1f4e8c"/><rect x="169.200" y="196.200" width="12.200" height="6" fill="#fff" stroke="#1f4e8c" stroke-width="1.500"/><rect x="164.800" y="201.200" width="20.800" height="10" rx="2.200" fill="#fff" stroke="#1f4e8c" stroke-width="1.600"/><path d="M176.800 204h5" stroke="#1f4e8c" stroke-width="1.200"/><rect x="169.600" y="207.200" width="11.400" height="7.800" rx="1.200" fill="#d5d9e2" stroke="#1f4e8c" stroke-width="1.500"/><path d="M215.200 195.400L222.800 205.400H219.200V214.400H211.200V205.400H207.600z" fill="#fff" stroke="#1f4e8c" stroke-width="1.500" stroke-linejoin="round"/><path d="M246 215L253.600 205H250V196H242V205H238.400z" fill="#fff" stroke="#1f4e8c" stroke-width="1.500" stroke-linejoin="round"/><path d="M14 235.800L18.800 240.600L23.600 235.800" stroke="#333" stroke-width="1.900"/><path d="M126 399h14" stroke="#b9b9b9" stroke-width="1.400" stroke-dasharray="1.600 2.200"/><path d="M126 629h14" stroke="#b9b9b9" stroke-width="1.400" stroke-dasharray="1.600 2.200"/><path d="M264.800 508.500v13" stroke="#b9b9b9" stroke-width="1.400" stroke-dasharray="1.600 2.200"/><path d="M10.400 435.100h13.400M17.100 428.400v13.400" stroke="#222" stroke-width="1.600"/><path d="M33.600 428.800L46.200 441.400M46.200 428.800L33.600 441.400" stroke="#dc4c4c" stroke-width="2.500"/><path d="M54.500 426v17.600M108.600 426v17.600" stroke="#8e8e8e" stroke-width="1"/><path d="M63.800 437.400h14.400l-7.200 -6.400zM86.800 430.600h14.400l-7.200 6.400z" fill="#3a3a3a"/><path d="M118 431.600l7 -3.400 7 3.400 -7 3.400z" fill="#fff" stroke="#9fb4d2" stroke-width="0.900"/><path d="M118 436.600l7 -3.400 7 3.400 -7 3.400z" fill="#fff" stroke="#9fb4d2" stroke-width="0.900"/><path d="M141 431.600l7 -3.400 7 3.400 -7 3.400z" fill="#fff" stroke="#9fb4d2" stroke-width="0.900"/><path d="M141 436.600l7 -3.400 7 3.400 -7 3.400z" fill="#fff" stroke="#9fb4d2" stroke-width="0.900"/><path d="M124.600 435.200l3.200 -2.600v1.600h3.600v2.200h-3.600v1.600z" fill="#fff" stroke="#476fa8" stroke-width="0.900"/><path d="M148 432.400v5.600M145.800 436l2.200 2.400 2.200 -2.400" stroke="#7a97c2" stroke-width="1"/><rect x="23.5" y="475.5" width="10" height="10" fill="#fff" stroke="#333" stroke-width="1"/><path d="M25.2 480.7l2.400 2.600 4.200 -5.400" stroke="#000" stroke-width="1.700"/><rect x="23.5" y="495.5" width="10" height="10" fill="#fff" stroke="#333" stroke-width="1"/><rect x="218.5" y="682.5" width="10" height="10" fill="#fff" stroke="#333" stroke-width="1"/><path d="M220.2 687.7l2.400 2.600 4.200 -5.400" stroke="#000" stroke-width="1.700"/><rect x="218.5" y="702.5" width="10" height="10" fill="#fff" stroke="#333" stroke-width="1"/><path d="M220.2 707.7l2.400 2.600 4.200 -5.400" stroke="#000" stroke-width="1.700"/><rect x="218.5" y="722.5" width="10" height="10" fill="#fff" stroke="#333" stroke-width="1"/><path d="M220.2 727.7l2.400 2.600 4.200 -5.400" stroke="#000" stroke-width="1.700"/><rect x="8.500" y="607.500" width="12" height="12" fill="#fff" stroke="#333"/><path d="M10.600 613.400l3 3.400 5.400 -7.200" stroke="#222" stroke-width="1.100"/><path d="M206 480.9Q212.900 475.3 219.800 480.9Q212.900 486.5 206 480.9z" fill="#fff" stroke="#6c8bbb" stroke-width="0.900"/><circle cx="212.900" cy="480.9" r="2.600" fill="#8aa3cb" stroke="#30599a" stroke-width="1"/><circle cx="212.900" cy="480.9" r="0.900" fill="#fff"/><rect x="238.600" y="481.1" width="11" height="6.800" rx="0.800" fill="#dfe5f0" stroke="#7d98c4" stroke-width="0.900"/><path d="M241 481.1v-3q0 -3.200 3.200 -3.200q3 0 3.200 2.600" stroke="#7d98c4" stroke-width="1.200"/><circle cx="244" cy="484.3" r="1" stroke="#7d98c4" stroke-width="0.700"/><path d="M206 501.1Q212.900 495.5 219.800 501.1Q212.900 506.7 206 501.1z" fill="#fff" stroke="#6c8bbb" stroke-width="0.900"/><circle cx="212.900" cy="501.1" r="2.600" fill="#8aa3cb" stroke="#30599a" stroke-width="1"/><circle cx="212.900" cy="501.1" r="0.900" fill="#fff"/><rect x="238.600" y="501.3" width="11" height="6.800" rx="0.800" fill="#dfe5f0" stroke="#7d98c4" stroke-width="0.900"/><path d="M241 501.3v-3q0 -3.200 3.200 -3.200q3 0 3.200 2.600" stroke="#7d98c4" stroke-width="1.200"/><circle cx="244" cy="504.5" r="1" stroke="#7d98c4" stroke-width="0.700"/></svg>
<span class="t" style="left:709.4px;top:10.7px;letter-spacing:-0.015px;color:#fff;">Unión</span>
<span class="t" style="left:137.3px;top:36.3px;letter-spacing:0.228px;">Modelo</span>
<span class="t" style="left:202.2px;top:36.3px;letter-spacing:-0.089px;">Cálculo</span>
<span class="t" style="left:266.4px;top:36.3px;letter-spacing:-0.360px;">Láminas</span>
<span class="t" style="left:9.2px;top:96.5px;letter-spacing:-0.059px;">Biblioteca</span>
<span class="t" style="left:96.6px;top:68.0px;letter-spacing:-0.654px;">Crear</span>
<span class="t" style="left:96.6px;top:101.2px;letter-spacing:-0.355px;">Insertar</span>
<span class="t" style="left:48.2px;top:152.9px;letter-spacing:-0.148px;">Plantillas</span>
<span class="t" style="left:147.3px;top:96.5px;letter-spacing:-0.277px;">Láminas</span>
<span class="t" style="left:226.0px;top:68.0px;letter-spacing:-0.658px;">Línea</span>
<span class="t" style="left:226.0px;top:101.2px;letter-spacing:-0.334px;">Relleno</span>
<span class="t" style="left:300.4px;top:68.0px;letter-spacing:-0.372px;">Texto</span>
<span class="t" style="left:300.4px;top:101.2px;letter-spacing:-0.386px;">Cota</span>
<span class="t" style="left:221.5px;top:152.9px;letter-spacing:-0.474px;">Estilos</span>
<span class="t" style="left:341.2px;top:96.5px;letter-spacing:-0.906px;">Escena</span>
<span class="t" style="left:351.6px;top:111.5px;letter-spacing:-1.044px;">3D</span>
<span class="t" style="left:385.4px;top:96.5px;letter-spacing:-0.284px;">Insertar</span>
<span class="t" style="left:383.7px;top:111.5px;letter-spacing:0.053px;">ficheros</span>
<span class="t" style="left:436.1px;top:96.5px;letter-spacing:-0.190px;">Símbolos</span>
<span class="t" style="left:433.1px;top:111.5px;letter-spacing:-0.150px;">de usuario</span>
<span class="t" style="left:523.5px;top:65.7px;letter-spacing:-0.633px;">Línea</span>
<span class="t" style="left:523.5px;top:96.7px;letter-spacing:-0.329px;">Arco</span>
<span class="t" style="left:523.5px;top:127.5px;letter-spacing:-0.096px;">Polígono</span>
<span class="t" style="left:606.4px;top:65.7px;letter-spacing:-0.698px;">Elipses</span>
<span class="t" style="left:606.4px;top:96.7px;letter-spacing:-0.232px;">Rectángulos</span>
<span class="t" style="left:606.4px;top:127.5px;letter-spacing:-0.071px;">Cuadro de texto</span>
<span class="t" style="left:726.2px;top:65.7px;letter-spacing:-0.221px;">Etiqueta</span>
<span class="t" style="left:726.2px;top:96.7px;letter-spacing:-0.297px;">Texto</span>
<span class="t" style="left:726.2px;top:127.5px;letter-spacing:-0.598px;">Tablas</span>
<span class="t" style="left:804.1px;top:65.7px;letter-spacing:-0.334px;">Sección</span>
<span class="t" style="left:804.1px;top:96.7px;letter-spacing:-0.089px;">Vínculo</span>
<span class="t" style="left:804.1px;top:127.5px;letter-spacing:0.125px;">Acotación</span>
<span class="t" style="left:550.2px;top:152.9px;letter-spacing:-0.075px;">Elementos de dibujo</span>
<span class="t" style="left:878.5px;top:96.2px;letter-spacing:-0.138px;">Organización</span>
<span class="t" style="left:959.2px;top:96.5px;letter-spacing:0.103px;">Composición</span>
<span class="t" style="left:966.7px;top:111.5px;letter-spacing:-0.226px;">de láminas</span>
<span class="t" style="left:1037.0px;top:96.5px;letter-spacing:-0.030px;">Sustitución</span>
<span class="t" style="left:1042.5px;top:111.5px;letter-spacing:-0.150px;">de textos</span>
<span class="t" style="left:1202.3px;top:152.9px;letter-spacing:-0.110px;">Edición</span>
<span class="t" style="left:1400.4px;top:96.5px;letter-spacing:0.144px;">Mostrar/Ocultar</span>
<span class="t" style="left:1413.4px;top:111.5px;letter-spacing:-0.067px;">incidencias</span>
<span class="t" style="left:8.2px;top:172.8px;letter-spacing:-0.310px;">Láminas</span>
<span class="t" style="left:272.2px;top:172.8px;letter-spacing:-0.190px;">Área de trabajo</span>
<span class="t" style="left:32.5px;top:230.8px;letter-spacing:-0.284px;font-weight:bold;color:#3b3b3b;">Pendiente de asignar</span>
<span class="t" style="left:53.5px;top:249.6px;letter-spacing:-0.447px;">T8 (3.6, 3.5, 4.09). Lámina 1</span>
<span class="t" style="left:8.5px;top:406.4px;letter-spacing:-0.797px;">Capas</span>
<span class="t" style="left:12.2px;top:453.0px;letter-spacing:-0.078px;">Activa</span>
<span class="t" style="left:58.2px;top:453.0px;letter-spacing:-0.392px;">Referencia</span>
<span class="t" style="left:58.2px;top:474.0px;letter-spacing:-0.601px;">Capa 0</span>
<span class="t" style="left:58.2px;top:494.3px;letter-spacing:-0.177px;">Cajetin</span>
<span class="t" style="left:11.3px;top:557.6px;letter-spacing:-0.393px;font-weight:bold;color:#444;">Visualización en pantalla</span>
<span class="t" style="left:8.5px;top:581.1px;letter-spacing:-0.047px;">Color</span>
<span class="t" style="left:149.3px;top:582.0px;letter-spacing:0.129px;">Color identificativo</span>
<span class="t" style="left:24.4px;top:606.8px;letter-spacing:-0.204px;width:236.6px;overflow:hidden;">Representar las líneas con el grosor de impresión</span>
<span class="t" style="left:8.5px;top:636.1px;letter-spacing:-0.367px;">Categorías</span>
<span class="t" style="left:13.1px;top:659.9px;letter-spacing:-0.238px;">Categoría</span>
<span class="t" style="left:194.4px;top:659.9px;letter-spacing:-0.124px;">Capturable</span>
<span class="t" style="left:13.1px;top:680.8px;letter-spacing:-0.555px;">Chapas</span>
<span class="t" style="left:13.2px;top:700.9px;letter-spacing:-0.028px;">mechanicalfastenerdowel</span>
<span class="t" style="left:13.2px;top:721.0px;letter-spacing:0.086px;">memberwoodenbar</span>
<span class="t" style="left:753.0px;top:873.6px;letter-spacing:0.040px;">Aceptar</span>
</body></html>
